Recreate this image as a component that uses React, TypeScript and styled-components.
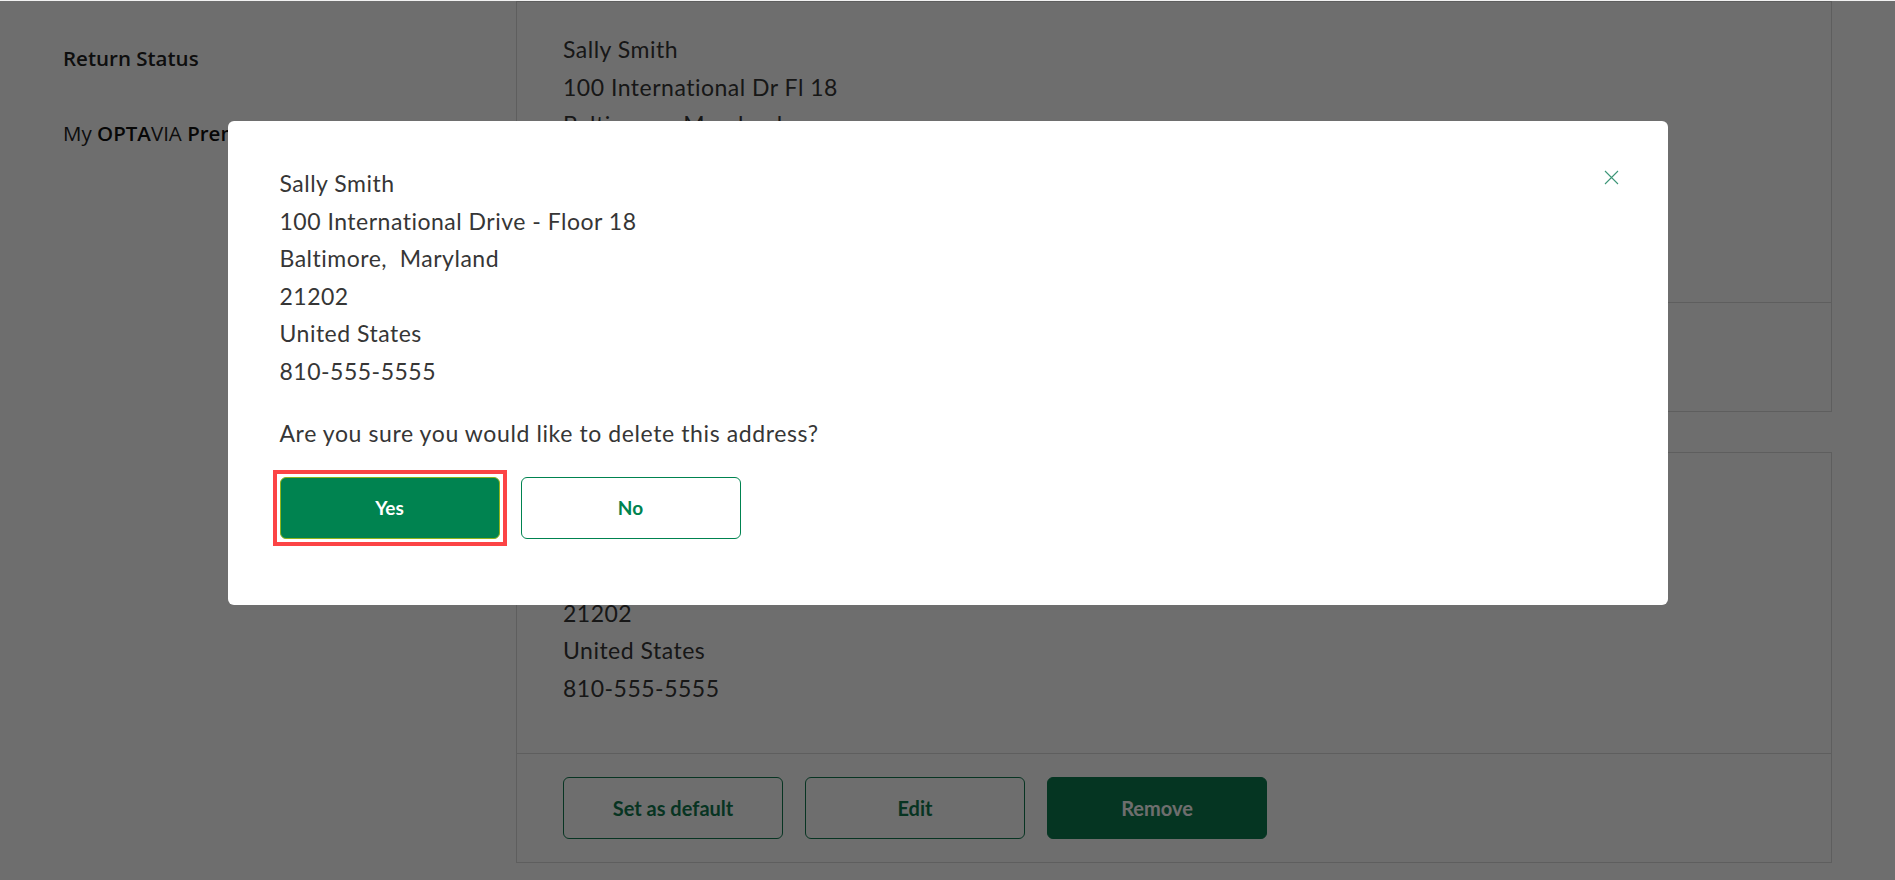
import { FC, ReactNode } from 'react'
import styled, { createGlobalStyle } from 'styled-components'

const GlobalStyle = createGlobalStyle`
  html, body {
    margin: 0;
    padding: 0;
    background: #ffffff;
  }

  body {
    font-family: Lato, 'Open Sans', 'Liberation Sans', sans-serif;
    color: #333333;
    overflow: hidden;
  }

  * {
    box-sizing: border-box;
  }
`

const Page = styled.div`
  min-height: 880px;
  border-top: 1px solid #f2f2f2;
`

const Layout = styled.div`
  display: flex;
  align-items: flex-start;
`

const Sidebar = styled.nav`
  flex: 0 0 516px;
  display: flex;
  flex-direction: column;
  gap: 47px;
  padding: 43px 0 0 63px;
  overflow: hidden;
`

const NavItem = styled.a<{ $strong?: boolean }>`
  font-family: 'Open Sans', 'Liberation Sans', sans-serif;
  font-size: 20.5px;
  line-height: 28px;
  font-weight: ${({ $strong }) => ($strong ? 600 : 400)};
  color: #222222;
  white-space: nowrap;

  b {
    font-weight: 600;
    color: #111111;
  }
`

const Main = styled.main`
  flex: 0 0 1316px;
  display: flex;
  flex-direction: column;
  gap: 40px;
`

const AddressCard = styled.section`
  border: 1px solid #dadada;
`

const AddressBody = styled.div`
  padding: 29px 46px 46px;
`

const AddressLine = styled.div`
  font-size: 23px;
  line-height: 37.5px;
  letter-spacing: 0.5px;
  color: #363636;
  white-space: pre;
`

const CardActions = styled.div`
  display: flex;
  gap: 22px;
  padding: 23px 46px;
  border-top: 1px solid #dadada;
`

const Button = styled.button<{ $variant: 'solid' | 'outline' }>`
  width: 220px;
  height: 62px;
  border-radius: 6px;
  font-family: Lato, 'Liberation Sans', sans-serif;
  font-size: 20px;
  font-weight: 700;
  cursor: pointer;
  background: ${({ $variant }) => ($variant === 'solid' ? '#0c7c50' : '#ffffff')};
  color: ${({ $variant }) => ($variant === 'solid' ? '#ffffff' : '#127a50')};
  border: 1px solid ${({ $variant }) => ($variant === 'solid' ? '#0c7c50' : '#127a50')};
`

const Overlay = styled.div`
  position: fixed;
  inset: 1px 0 0 0;
  background: rgba(0, 0, 0, 0.57);
  display: flex;
  justify-content: center;
  align-items: flex-start;
  padding-top: 120px;
`

const Modal = styled.div`
  position: relative;
  width: 1440px;
  padding: 44px 52px 66px;
  background: #ffffff;
  border-radius: 6px;
`

const CloseButton = styled.button`
  position: absolute;
  top: 48px;
  right: 48px;
  width: 16px;
  height: 16px;
  padding: 0;
  border: 0;
  background: transparent;
  cursor: pointer;
  display: flex;
  align-items: center;
  justify-content: center;
`

const Question = styled.p`
  margin: 25px 0 0;
  font-size: 23px;
  line-height: 37.5px;
  letter-spacing: 0.6px;
  color: #363636;
`

const ModalActions = styled.div`
  display: flex;
  align-items: center;
  gap: 21px;
  margin-top: 24px;
`

const FocusFrame = styled.span`
  display: inline-flex;
  margin: -7px;
  padding: 3px;
  border: 4px solid #fc4445;
`

const ConfirmButton = styled.button<{ $primary?: boolean }>`
  width: 220px;
  height: 62px;
  border-radius: 6px;
  font-family: Lato, 'Liberation Sans', sans-serif;
  font-size: 19px;
  font-weight: 700;
  cursor: pointer;
  outline: none;
  background: ${({ $primary }) => ($primary ? '#008350' : '#ffffff')};
  color: ${({ $primary }) => ($primary ? '#ffffff' : '#008350')};
  border: 1px solid ${({ $primary }) => ($primary ? '#8fb31c' : '#008350')};
`

const cardAddress = [
  'Sally Smith',
  '100 International Dr Fl 18',
  'Baltimore,  Maryland',
  '21202',
  'United States',
  '810-555-5555',
]

const modalAddress = [
  'Sally Smith',
  '100 International Drive - Floor 18',
  'Baltimore,  Maryland',
  '21202',
  'United States',
  '810-555-5555',
]

const Card: FC<{ lines: string[] }> = ({ lines }) => (
  <AddressCard>
    <AddressBody>
      {lines.map((line) => (
        <AddressLine key={line}>{line}</AddressLine>
      ))}
    </AddressBody>
    <CardActions>
      <Button $variant='outline'>Set as default</Button>
      <Button $variant='outline'>Edit</Button>
      <Button $variant='solid'>Remove</Button>
    </CardActions>
  </AddressCard>
)

const Focused: FC<{ children: ReactNode }> = ({ children }) => (
  <FocusFrame>{children}</FocusFrame>
)

const App: FC = () => (
  <Page>
    <GlobalStyle />
    <Layout>
      <Sidebar>
        <NavItem $strong>Return Status</NavItem>
        <NavItem>
          My <b>OPTA</b>VIA <b>Premier Membership</b>
        </NavItem>
      </Sidebar>
      <Main>
        <Card lines={cardAddress} />
        <Card lines={cardAddress} />
      </Main>
    </Layout>

    <Overlay>
      <Modal role='dialog' aria-modal='true'>
        <CloseButton aria-label='Close'>
          <svg width='15' height='15' viewBox='0 0 15 15' fill='none'>
            <path d='M1 1L14 14M14 1L1 14' stroke='#3d9677' strokeWidth='1.1' />
          </svg>
        </CloseButton>
        {modalAddress.map((line) => (
          <AddressLine key={line}>{line}</AddressLine>
        ))}
        <Question>Are you sure you would like to delete this address?</Question>
        <ModalActions>
          <Focused>
            <ConfirmButton $primary>Yes</ConfirmButton>
          </Focused>
          <ConfirmButton>No</ConfirmButton>
        </ModalActions>
      </Modal>
    </Overlay>
  </Page>
)

export default App
